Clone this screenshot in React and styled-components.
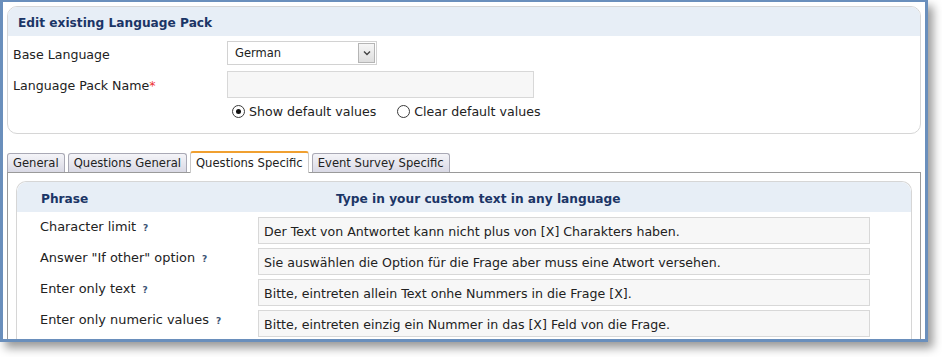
import styled, { createGlobalStyle } from 'styled-components';

const GlobalStyle = createGlobalStyle`
  html, body {
    margin: 0;
    padding: 0;
    background: #ffffff;
  }
  body {
    font-family: "DejaVu Sans", Verdana, sans-serif;
    font-size: 12.6px;
    color: #222;
  }
`;

const NAVY = '#1b3566';
const HEAD_BG = '#e7eef6';

const Page = styled.div`
  width: 942px;
  height: 357px;
  overflow: hidden;
`;

const Frame = styled.div`
  width: 922px;
  height: 337px;
  border-style: solid;
  border-color: #6a8fbc;
  border-width: 2px 3px 3px 3px;
  background: #fff;
  box-shadow: 5px 6px 9px rgba(0, 0, 0, 0.4);
  overflow: hidden;
  display: flex;
  flex-direction: column;
`;

const Panel = styled.div`
  margin: 4px 4px 0 4px;
  border: 1px solid #d6d6d6;
  border-radius: 10px;
  overflow: hidden;
  background: #fff;
  flex-shrink: 0;
`;

const PanelHead = styled.div`
  background: ${HEAD_BG};
  height: 29px;
  display: flex;
  align-items: center;
  padding: 2px 0 0 10px;
  box-sizing: border-box;
  font-weight: bold;
  color: ${NAVY};
  font-size: 12.2px;
`;

const Form = styled.div`
  display: flex;
  flex-direction: column;
  padding: 5px 0 15px 5px;
`;

const FormRow = styled.div`
  display: flex;
  align-items: center;
  height: ${(p) => p.$h}px;
  margin-top: ${(p) => p.$gap || 0}px;
`;

const Label = styled.div`
  width: 214px;
  flex-shrink: 0;
  padding-top: ${(p) => p.$drop || 0}px;
`;

const Required = styled.span`
  color: #e33;
`;

const Select = styled.div`
  width: 150px;
  height: 24px;
  border: 1px solid #d2d2d2;
  display: flex;
  align-items: center;
  justify-content: space-between;
  font-size: 11.5px;
  padding-left: 7px;
  box-sizing: border-box;
`;

const SelectArrow = styled.div`
  width: 17px;
  height: 20px;
  margin-right: 1px;
  border: 1px solid #b5b5b5;
  background: linear-gradient(#f6f6f6, #dedede);
  box-sizing: border-box;
  display: flex;
  align-items: center;
  justify-content: center;
`;

const TextBox = styled.div`
  width: 307px;
  height: 27px;
  border: 1px solid #d8d8d8;
  background: #f7f7f7;
  box-sizing: border-box;
`;

const RadioGroup = styled.div`
  display: flex;
  align-items: center;
  gap: 21px;
  padding-left: 5px;
`;

const RadioLabel = styled.label`
  display: flex;
  align-items: center;
  gap: 4px;
`;

const RadioDot = styled.span`
  width: 11px;
  height: 11px;
  border-radius: 50%;
  border: 1px solid #3a3a3a;
  background: #fff;
  display: flex;
  align-items: center;
  justify-content: center;

  &::after {
    content: '';
    width: 5px;
    height: 5px;
    border-radius: 50%;
    background: ${(p) => (p.$on ? '#111' : 'transparent')};
  }
`;

const Tabs = styled.div`
  display: flex;
  align-items: flex-end;
  gap: 3px;
  margin: 17px 0 0 4px;
  height: 21px;
  flex-shrink: 0;
`;

const Tab = styled.div`
  height: ${(p) => (p.$active ? 22 : 19)}px;
  box-sizing: border-box;
  padding: 0 5px;
  font-size: 11.6px;
  display: flex;
  align-items: center;
  border: 1px solid ${(p) => (p.$active ? '#c9c9c9' : '#a9a9b5')};
  border-bottom: none;
  border-top: ${(p) => (p.$active ? '2px solid #f0a030' : '1px solid #a9a9b5')};
  border-radius: 3px 3px 0 0;
  background: ${(p) => (p.$active ? '#fff' : 'linear-gradient(#f4f4f8, #d9d9e5)')};
  margin-bottom: ${(p) => (p.$active ? -1 : 0)}px;
  position: relative;
`;

const TabBody = styled.div`
  margin: 0 4px 0 4px;
  border: 1px solid #9a9a9a;
  border-bottom: none;
  padding: 8px 8px 0 8px;
  flex: 1;
`;

const Inner = styled.div`
  border: 1px solid #d6d6d6;
  border-bottom: none;
  border-radius: 10px 10px 0 0;
  height: 100%;
`;

const InnerHead = styled.div`
  background: ${HEAD_BG};
  height: 30px;
  padding-top: 3px;
  box-sizing: border-box;
  display: flex;
  align-items: center;
  font-weight: bold;
  font-size: 12.2px;
  color: ${NAVY};
  border-radius: 10px 10px 0 0;
`;

const HeadCell = styled.div`
  width: ${(p) => p.$w}px;
  padding-left: ${(p) => p.$pad}px;
  box-sizing: border-box;
`;

const Rows = styled.div`
  display: flex;
  flex-direction: column;
  gap: 4px;
  padding-top: 5px;
`;

const PhraseRow = styled.div`
  display: flex;
  align-items: flex-start;
`;

const PhraseLabel = styled.div`
  width: 241px;
  flex-shrink: 0;
  padding-left: 23px;
  padding-top: 2px;
  box-sizing: border-box;
  font-size: 12.9px;
`;

const Help = styled.span`
  font-size: 9px;
  font-weight: bold;
  color: #3c5474;
  margin-left: 7px;
`;

const PhraseInput = styled.div`
  width: 612px;
  height: 27px;
  border: 1px solid #d8d8d8;
  background: #f7f7f7;
  box-sizing: border-box;
  display: flex;
  align-items: center;
  padding: 1px 0 0 5px;
`;

const phrases = [
  ['Character limit', 'Der Text von Antwortet kann nicht plus von [X] Charakters haben.'],
  ['Answer "If other" option', 'Sie auswählen die Option für die Frage aber muss eine Atwort versehen.'],
  ['Enter only text', 'Bitte, eintreten allein Text onhe Nummers in die Frage [X].'],
  ['Enter only numeric values', 'Bitte, eintreten einzig ein Nummer in das [X] Feld von die Frage.'],
];

const tabs = ['General', 'Questions General', 'Questions Specific', 'Event Survey Specific'];

export default function App() {
  return (
    <Page>
      <GlobalStyle />
      <Frame>
        <Panel>
          <PanelHead>Edit existing Language Pack</PanelHead>
          <Form>
            <FormRow $h={24}>
              <Label $drop={2}>Base Language</Label>
              <Select>
                German
                <SelectArrow>
                  <svg width="8" height="6" viewBox="0 0 8 6">
                    <path d="M1 1.5 L4 4.5 L7 1.5" fill="none" stroke="#444" strokeWidth="1.4" />
                  </svg>
                </SelectArrow>
              </Select>
            </FormRow>
            <FormRow $h={27} $gap={6}>
              <Label $drop={2}>
                Language Pack Name<Required>*</Required>
              </Label>
              <TextBox />
            </FormRow>
            <FormRow $h={14} $gap={6}>
              <Label />
              <RadioGroup>
                <RadioLabel>
                  <RadioDot $on />
                  Show default values
                </RadioLabel>
                <RadioLabel>
                  <RadioDot />
                  Clear default values
                </RadioLabel>
              </RadioGroup>
            </FormRow>
          </Form>
        </Panel>

        <Tabs>
          {tabs.map((t) => (
            <Tab key={t} $active={t === 'Questions Specific'}>
              {t}
            </Tab>
          ))}
        </Tabs>
        <TabBody>
          <Inner>
            <InnerHead>
              <HeadCell $w={241} $pad={24}>Phrase</HeadCell>
              <HeadCell $w={400} $pad={78}>Type in your custom text in any language</HeadCell>
            </InnerHead>
            <Rows>
              {phrases.map(([label, text]) => (
                <PhraseRow key={label}>
                  <PhraseLabel>
                    {label}
                    <Help>?</Help>
                  </PhraseLabel>
                  <PhraseInput>{text}</PhraseInput>
                </PhraseRow>
              ))}
            </Rows>
          </Inner>
        </TabBody>
      </Frame>
    </Page>
  );
}
